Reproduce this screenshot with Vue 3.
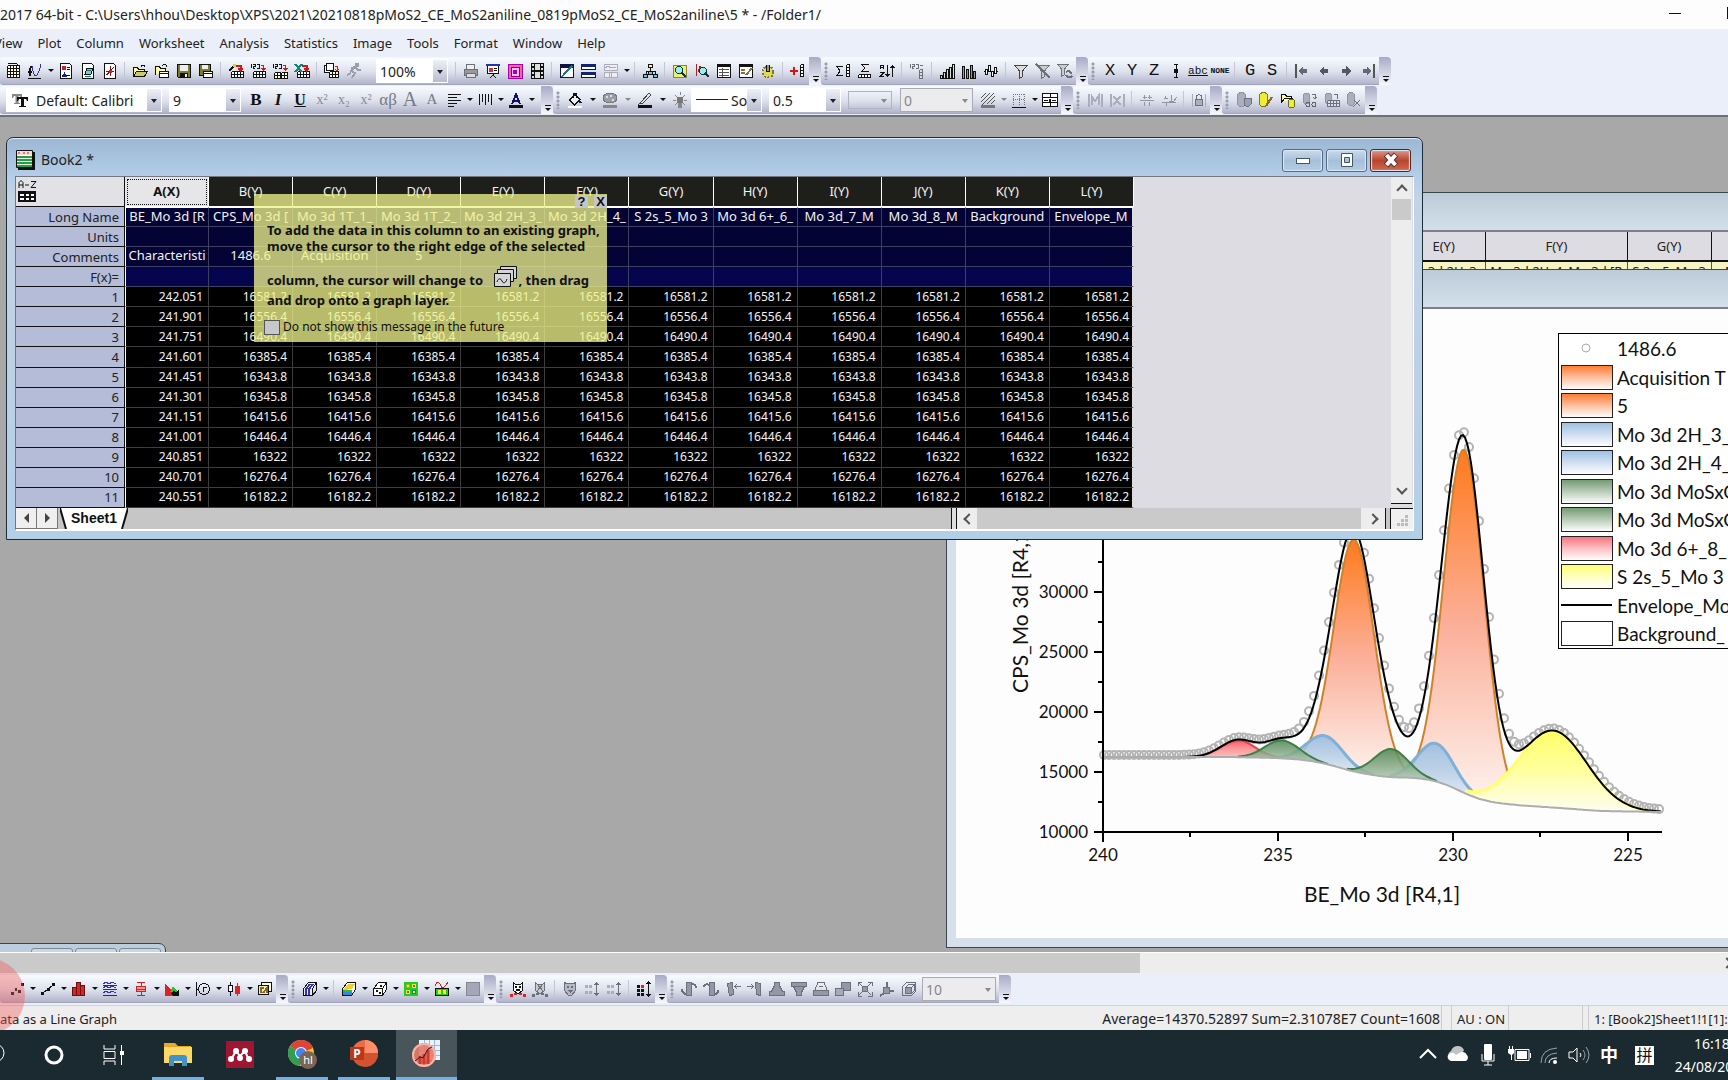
<script setup>
import { h } from 'vue'

/* ---------- icon drawing helpers (16 x 16 grid) ---------- */
const s = (d, c = '#111', w = 1) => `<path d="${d}" fill="none" stroke="${c}" stroke-width="${w}"/>`
const f = (d, c = '#111') => `<path d="${d}" fill="${c}"/>`
const b = (d, c, k = '#111') => `<path d="${d}" fill="${c}" stroke="${k}"/>`
const grid = (x, y, n, m, fill = '#ffd', c = '#111', step = 3) => {
  let d = ''
  for (let i = 0; i <= n; i++) d += `M${x + i * step} ${y}V${y + m * step}`
  for (let j = 0; j <= m; j++) d += `M${x} ${y + j * step}H${x + n * step}`
  return f(`M${x} ${y}h${n * step}v${m * step}h${-n * step}z`, fill) + s(d, c)
}
const page = b('M2.5 .5h9l2 2v13h-11z', '#fff')
const redArrow = s('M8 2.5h4.5v4M10.500 5l2 2.500 2-2.500', '#d01818', 2)
const smallArrow = s('M11 2.500h2.500v4M11.500 5l2 2 2-2', '#d01818')
const digits = s('M1.500 1v4M3 1.500h2v1.500h-2v2h2M7 1.500h2v3.500h-2')
const g1 = '#6d6f7b'
const g2 = '#a9adbd'
const numGrid = grid(3.5, 8.5, 4, 2, '#fff')

const icons = {
  newbook: grid(2.5, 2.5, 4, 4) + s('M2.500 .5h9l3 3'),
  curve: s('M5 2.500c2 14 5 14 9-1', '#339', 1) + s('M4.500 4c-2 0-1 3-2 9M1 8.500h4M1 15.500h13', '#111', 2),
  matrix: page + f('M4 3h4v4H4z', '#c22') + s('M9 4.500h3M9 6.500h3M4 12.500h8') + f('M4 14l2.500-5 2.500 5z', '#228'),
  layout: page + b('M5 11l2-6h6l-2 6z', '#7cc') + s('M5 13.500h6M7 7.500h4', '#177'),
  func: page + s('M4.500 12L12 4M8 3v10M4 8.500h8', '#811') + f('M7 7h3v3H7z', '#c22'),
  open: b('M1.500 13.500v-9h4l1 2h6v2', '#ff9') + b('M1.500 13.500l3-5h11l-3 5z', '#cc6') + s('M9 3.500c2-2 4-1 4 1'),
  opentpl: b('M1.500 11.500v-8h4l1 2h5v2', '#ff9') + b('M5.500 8.500h9v6h-9z', '#fff') + s('M5.500 10h9M8 2.500c2-2 5-1 5 1', '#111', 1),
  save: b('M1.500 1.500h13v13h-12l-1-1z', '#7b7b2a') + f('M4 2h8v6H4z', '#eee') + f('M4 10h8v4H4z') + f('M9 11h2v3H9z', '#eee'),
  savetpl: b('M1.500 1.500h11v11h-11z', '#7b7b2a') + f('M4 2h6v4H4z', '#eee') + b('M5.500 8.500h9v6h-9z', '#fff') + s('M5.500 10h9'),
  imp1: numGrid + s('M1 8l6-6', '#111', 2) + f('M5 1h3v3H5z', '#dc4') + redArrow,
  imp2: numGrid + digits + smallArrow,
  imp3: grid(2.5, 9.5, 2, 2) + grid(9.5, 9.5, 2, 2) + digits + smallArrow,
  excel: numGrid + s('M1 1l7 8M8 1L1 9', '#187', 2) + redArrow,
  batch: b('M.5 2.500h7v7h-7z', '#fff') + b('M2.500 .5h7v7h-7z', '#fff') + s('M11 3.500h2v4M11 6l2 2 2-2', '#c22') + grid(5.5, 8.5, 3, 2),
  run: s('M9 4l-4 4 4 2-3 5M5 5l4-1 3 3h3M5 10l-4 2', '#9a9dab', 2) + f('M9 0h4v4H9z', '#9a9dab'),
  print: b('M3.500 6V1.500h8V6', '#eee', g1) + b('M1.500 6.500h13v6h-13z', '#999', g1) + b('M3.500 10.500h9v4h-9z', '#ddd', g1),
  slide: b('M2.500 2.500h11v8h-11z', '#fff') + f('M1 1h14v2H1z', '#23b') + f('M4 5h4v4H4z', '#c33') + s('M9 5.500h3M9 7.500h3M8 11v2M5 15l3-3 3 3'),
  camera: b('M1 1h14v14H1z', '#e6a', '#a0a') + b('M4 4h8v9H4z', '#fbf', '#808') + '<circle cx="8" cy="9" r="2.500" fill="#a0a"/>',
  film: f('M2 0h13v16H2z') + f('M6 1h5v6H6zM6 9h5v6H6z', '#ddd') + f('M3 1h2v2H3zM3 5h2v2H3zM3 9h2v2H3zM3 13h2v2H3zM12 1h2v2h-2zM12 5h2v2h-2zM12 9h2v2h-2zM12 13h2v2h-2z', '#ddd'),
  note: b('M1.500 2.500h13v12h-13z', '#fff', '#114') + f('M1 1h14v4H1z', '#114') + s('M4 12l9-9M4 12l-1 2', '#277', 2),
  panes: b('M.5 1.500h14v5h-14zM.5 9.500h14v5h-14z', '#fff', '#113') + f('M0 1h15v3H0zM0 9h15v3H0z', '#127'),
  wave: b('M1.500 1.500h13v6h-13z', '#eee', g2) + b('M1.500 9.500h7v5h-7zM6.500 9.500h8v5h-8z', '#eee', g2) + s('M2 5l3-2 3 2 5-1', g2),
  tree: b('M6.500 1.500h4v3h-4z', '#ff6') + s('M8.500 5v3M4 12V8.500h9V12M8.500 8v4') + b('M1.500 11.500h4v3h-4zM11.500 11.500h4v3h-4zM6.500 8.500h4v3h-4z', '#6cc'),
  findy: b('M1.500 2.500h13v12h-13z', '#ee7', '#883') + '<circle cx="7" cy="7" r="3.500" fill="#9ee" stroke="#133"/>' + s('M10 10l4 4', '#133', 2),
  findg: s('M2.500 1v12M4 9l2-6 2 8 2-4', '#a22') + '<circle cx="9" cy="8" r="3.500" fill="#9ee" stroke="#133"/>' + s('M11 10l4 4', '#133', 2),
  list: b('M1.500 1.500h13v13h-13z', '#fff') + f('M1 1h14v3H1z') + s('M3 6.500h10M3 9.500h10M3 12.500h10M6.500 5v9', '#555'),
  listed: b('M1.500 1.500h13v13h-13z', '#fff') + f('M1 1h14v3H1z') + s('M3 6.500h4M3 9.500h4M8 12l6-7', '#774', 2),
  gear: '<circle cx="8" cy="9" r="5.500" fill="#dd5" stroke="#774" stroke-width="2" stroke-dasharray="2 1.500"/>' + b('M6.500 2v6h3V2', '#996'),
  addcol: s('M0 8h8M4 4v8', '#d11', 2) + grid(10.5, 1.5, 1, 4, '#fff'),
  sumcol: s('M8 3.500H2L5 8l-3 4.500h6') + grid(11.5, 1.5, 1, 4, '#fff'),
  sumrow: s('M12 1.500H5L8 5 5 8.500h7') + grid(1.5, 11.5, 4, 1, '#fff'),
  sort: s('M1.500 6V2h3v4M1.500 4.500h3M1 9.500h4l-4 4h4M8.500 2v11M6.500 11l2 2.500 2-2.500M13.500 14V3M11.500 5l2-2.500 2 2.500'),
  num: s('M1.500 1v4M3 1.500h2v1.500h-2v2h2M7 1.500h2v3.500h-2M11 2.500h3', g1) + grid(10.5, 6.5, 1, 3, '#ddd', g1),
  bars1: b('M1.500 12.500h2v3h-2zM4.500 9.500h2v6h-2zM7.500 6.500h2v9h-2zM10.500 4.500h2v11h-2zM13.500 1.500h2v14h-2z', '#ddd'),
  bars2: b('M1.500 3.500h2v12h-2zM5.500 6.500h2v9h-2zM9.500 2.500h2v13h-2zM12.500 8.500h2v7h-2z', '#999'),
  bars3: s('M1 8.500h14') + b('M2.500 6.500h2v5h-2zM5.500 2.500h2v6h-2zM8.500 8.500h2v5h-2zM11.500 4.500h2v6h-2z', '#fff'),
  filt: b('M2 2.500h12L9.500 8v5.500l-3 2V8z', '#ddd', '#444'),
  filtx: b('M2 2.500h12L9.500 8v5.500l-3 2V8z', '#ccc', g1) + s('M1 1l14 14', g1, 2),
  filtr: b('M1 1.500h10L7.500 6v5.500l-3 2V6z', '#ccc', g1) + s('M9 9c3-2 5 0 5 2M15 13c-3 3-5 1-6-1', g1, 2),
  marker: s('M8 1v14M6 1.500h4M6 14.500h4') + f('M6 6h4v4H6z'),
  first: s('M2 1v14', '#555', 2) + f('M5 8l4-5v3h4v4H9v3z', '#667'),
  prev: f('M3 8l5-5v3h4v4H8v3z', '#556'),
  next: f('M13 8L8 3v3H4v4h4v3z', '#556'),
  last: s('M14 1v14', '#555', 2) + f('M11 8L7 3v3H3v4h4v3z', '#667'),
  tt: f('M0 2h10v4H9L8 4H6.500v7H8v1H2v-1h1.500V4H2L1 6H0z', '#888') + f('M5 5h11v4h-1l-1-2h-2v7h2v1H7v-1h2V7H7L6 9H5z'),
  align: s('M2 2.500h13M2 5.500h9M2 8.500h13M2 11.500h9M2 14.500h6'),
  vbars: s('M2.500 2v11M5.500 2v8M8.500 2v11M11.500 2v8M14.500 2v11'),
  fontcol: s('M4 12L8 2l4 10M5 8.500h6', '#116', 2) + f('M1 13h14v3H1z'),
  bucket: b('M2.500 8L8 2.500l5 5L7.500 13z', '#eee') + s('M6 6V1.500h3V6') + f('M12 6l3 5h-3z', '#118') + f('M1 14h14v2H1z', '#fff'),
  palette: '<ellipse cx="8" cy="6" rx="7" ry="5" fill="#999caa" stroke="#777"/>' + f('M4 4h2v2H4zM8 3h2v2H8zM10 7h2v2h-2z', '#ddd') + f('M1 13h14v3H1z', '#888'),
  pen: s('M4 10l8-9 2 2-8 8-4 1z', '#444', 1) + f('M1 13h14v3H1z'),
  bulb: '<circle cx="8" cy="8" r="3.500" fill="#777"/>' + s('M8 0v3M1 8h3M12 8h3M3 3l2 2M13 3l-2 2M3 13l2-2M13 13l-2-2', '#888') + f('M6 11h4v5H6z', '#888'),
  hatch: s('M1 6l5-5M1 10l9-9M2 13L14 1M7 12l8-8M11 12l4-4', '#555', 1) + f('M1 13h14v3H1z', '#777'),
  dots: '<path d="M2 2.500h12M2 7.500h12M2.500 2v12M8.500 2v12M13.500 2v12" stroke="#777" fill="none" stroke-dasharray="1 1"/>' + s('M1 15.500h14'),
  merge: b('M.5 1.500h15v13H.5z', '#fff') + s('M.5 5.500h15M.5 10.500h15M8 1.500v4M8 10.500v4M2 8h4M10 8h4') + f('M7 6.500h2v3H7z'),
  mM: s('M1.500 2v13M14.500 2v13M4.500 13V4L8 9l3.500-5v9', g2, 2),
  mX: s('M1.500 2v13M14.500 2v13M4.500 4l7 9M11.500 4l-7 9', g2, 2),
  sp1: s('M1 8.500h14M5.500 3v4M3.500 5.500h4M5.500 10v4M10.500 3v4M8.500 5.500h4M10.500 10v4', '#9295a5', 1),
  sp2: s('M1 10.500h14M4.500 4v3M2.500 6h4M5.500 11v3M10 3v8M8 9h5l3-4', '#9295a5', 1),
  lock: s('M1.500 2v13M14.500 2v13', g2) + b('M4.500 7.500h7v6h-7z', '#aaaebd', g1) + s('M5.500 7V5c0-3 5-3 5 0v2', g1),
  db: b('M1.500 3v9c0 3 8 3 8 0V3c0-3-8-3-8 0z', '#aaaebd', '#9094a4') + b('M8 6h7v6l-3 3-4-2z', '#9ba0b2', g1),
  dbedit: b('M1.500 3v9c0 3 8 3 8 0V3c0-3-8-3-8 0z', '#ee3', '#773') + s('M8 14l6-9', '#962', 2),
  dbopen: b('M1.500 10.500v-8h4l1 2h5v2', '#ff9') + b('M8.500 9v5c0 2 6 2 6 0V9c0-2-6-2-6 0z', '#ee3', '#663') + s('M2 10l3-4h8'),
  dbview: b('M1.500 3v7c0 2 6 2 6 0V3c0-2-6-2-6 0z', '#aaaebd', '#9094a4') + s('M10 2.500h3v4M11 5l2 2 2-2', g1) + '<circle cx="6" cy="12.500" r="2" fill="none" stroke="#666"/><circle cx="12" cy="12.500" r="2" fill="none" stroke="#666"/>',
  dbgrid: b('M1.500 3v7c0 2 6 2 6 0V3c0-2-6-2-6 0z', '#aaaebd', '#9094a4') + s('M10 2.500h3v4', g1) + grid(3.5, 8.5, 4, 2, '#dde', g1),
  dbdel: b('M1.500 3v8c0 3 7 3 7 0V3c0-3-7-3-7 0z', '#aaaebd', '#9094a4') + s('M8 8l6 6M14 8l-7 7', g1),

  scatter: f('M2 11h3v3H2zM6 7h2v3H6zM9 9h3v3H9zM12 2h3v3h-3z'),
  lsym: s('M3 12L13 4') + f('M1 11h3v3H1zM7 7h3v3H7zM12 2h3v3h-3z'),
  column: b('M1.500 6.500h4v8h-4zM5.500 1.500h4v13h-4zM9.500 4.500h4v10h-4z', '#d22', '#611'),
  waves: s('M1 2.500l3-1 3 1 3-1 4 1M1 6.500l3-1 3 1 3-1 4 1M1 11.500l3-1 3 1 3-1 4 1', '#33a') + s('M1 4.500h14M1 8.500h14M1 14.500h14', '#333'),
  boxp: s('M8 1v14M4 1.500h8M4 14.500h8', '#c22', 1) + b('M3.500 5.500h9v5h-9z', '#f99', '#c22') + s('M3 8h10', '#c22'),
  area: f('M1 3v12h14z', '#d22') + f('M9 5l5 6H6z', '#3b3') + f('M7 12l3-2 2 2 3-4v7H9z'),
  polar: '<circle cx="9" cy="8" r="5.500" fill="none" stroke="#111"/>' + s('M1.500 1v14M1 8h3M8.500 11V6.500h3'),
  stock: s('M4.500 1v14') + b('M2.500 4.500h4v6h-4z', '#fff') + s('M11.500 2v13', '#c22') + f('M9 5h5v8H9z', '#d22'),
  tmpl: b('M4.500 1.500h10v9h-10z', '#ffd') + b('M1.500 4.500h10v9h-10z', '#fe9') + s('M4 12V7h3M6 12l4-5v5', '#863', 2),
  cube: b('M1.500 7.500l5-6h8l-4 6v7h-9z', '#eef') + s('M4 14V8l4-5M7 14V8l4-5', '#33a', 2) + s('M10.500 14.500l4-5v-8'),
  surf: b('M1.500 7.500l5-6h8v7l-4 6h-9z', '#fff') + f('M2 9l5-6h7l-3 5z', '#ec3') + f('M2 9h9v2H2z', '#3b3') + f('M2 11h9v3H2z', '#38d'),
  cubed: b('M1.500 7.500l5-6h8v7l-4 6h-9z', '#fff') + s('M10.500 14V7.500M1.500 7.500h9l4-6') + f('M4 9h2v2H4zM7 11h2v2H7zM8 4h2v2H8z'),
  contour: f('M1 1h14v14H1z', '#2c2') + '<circle cx="5" cy="5" r="2" fill="#ee3" stroke="#aa2"/><circle cx="11" cy="5" r="2" fill="#d33" stroke="#ee3"/><circle cx="5" cy="11" r="2" fill="#d33" stroke="#ee3"/><circle cx="11" cy="11" r="2" fill="#ee3" stroke="#186"/>',
  profile: s('M1 5c2-6 4-4 6 0s4 0 7-4', '#c22') + b('M1.500 7.500h13v7h-13z', '#2c2') + f('M4 9h3v4H4zM9 9h3v4H9z', '#ee3'),
  graysq: b('M1.500 1.500h13v13h-13z', '#a4a7ba', '#888'),
  mask1: b('M3.500 1.500l2 2h5l2-2v8l-4 3h-1l-4-3z', '#fff') + f('M5 5h2v2H5zM9 5h2v2H9zM6 8h4v2H6z') + f('M0 13h3v3H0zM4 12h3v2H4zM9 12h3v2H9zM13 13h3v3h-3z', '#d22'),
  mask2: b('M3.500 1.500l2 2h5l2-2v8l-4 3h-1l-4-3z', '#ccc', g1) + s('M4 2l8 9M12 2l-8 9', g1) + f('M0 13h3v3H0zM4 12h3v2H4zM9 12h3v2H9zM13 13h3v3h-3z', g1),
  mask3: b('M2.500 1.500l2 1h7l2-1v8l-4 5h-3l-4-5z', '#b4b8c8', g1) + f('M5 5h2v2H5zM9 5h2v2H9zM5 9h6l-3 3z', g1),
  pts: f('M1 4h3v3H1zM5 4h3v3H5zM1 10h3v3H1zM5 10h3v3H5z', g2) + s('M12.500 2v12M10.500 4l2-2 2 2M10.500 12l2 2 2-2', g1),
  ptsr: f('M1 4h3v3H1zM1 8h3v3H1zM5 8h3v3H5zM1 12h3v3H1zM5 12h3v3H5z') + f('M5 4h3v3H5z', '#d22') + s('M12.500 1v14M10.500 3l2-2 2 2M10.500 13l2 2 2-2'),
  rot1: b('M5.500 1.500h5v13h-5z', '#9397a8', g1) + s('M1 8c0 4 3 5 4 5M15 7c0-3-2-4-4-4', g1, 2),
  rot2: b('M6.500 1.500h5v13h-5z', '#9397a8', g1) + s('M1 6c0-3 3-3 5-2M15 9c0 4-2 4-4 4', g1, 2),
  tilt1: b('M2.500 2.500l5-1 1 12-4 1z', '#9397a8', g1) + s('M10 5.500h6M12 3l-2 2.500 2 2.500', g1, 1),
  tilt2: b('M13.500 2.500l-5-1 1 12 4 1z', '#9397a8', g1) + s('M0 5.500h6M4 3l2 2.500-2 2.500', g1, 1),
  trap1: b('M5.500 1.500h5v3l3 6h2v4h-15v-4h2l3-6z', '#9397a8', g1),
  trap2: b('M.5 1.500h15v4h-2l-3 6v3h-5v-3l-3-6h-2z', '#9397a8', g1) + s('M1 5.500h14', g1),
  trap3: b('M.5 9.500h15v5H.5z', '#9397a8', g1) + s('M2 9l3-8h6l3 8M6 5.500h4', g1),
  stack: b('M6.500 1.500h9v8h-9z', '#9397a8', g1) + b('M.5 7.500h8v7h-8z', '#a5a9ba', g1),
  expand: b('M5.500 5.500h5v5h-5z', '#9397a8', g1) + s('M1 5V1h4M11 1h4v4M1 11v4h4M11 15h4v-4M2 2l4 4M14 2l-4 4M2 14l4-4M14 14l-4-4', g1),
  axes: b('M4.500 6.500h6v6h-6z', '#9397a8', g1) + s('M7.500 1v6M11 9.500h4M5 12l-4 3', g1, 2),
  cubeg: b('M4.500 6.500h6v6h-6z', '#9397a8', g1) + s('M1.500 14.500v-9l4-4h9v9l-4 4zM10.500 6.500l3-3M4.500 6.500l3-3h6v6l-3 3', g1),
}
const Icon = (p) => h('svg', { viewBox: '0 0 16 16', width: 16, height: 16, 'aria-hidden': 'true', innerHTML: icons[p.name] })
Icon.props = ['name']

/* ---------- menus and toolbars ---------- */
const menus = ['View', 'Plot', 'Column', 'Worksheet', 'Analysis', 'Statistics', 'Image', 'Tools', 'Format', 'Window', 'Help']

// '|' separator, 'v' drop-down arrow (g dimmed, w wide), 't:' text button, anything else an icon
const row1 = [
  ['newbook', 'curve', 'v', 'matrix', 'layout', 'func', '|', 'open', 'opentpl', 'save', 'savetpl', '|', 'imp1', 'imp2', 'imp3', 'excel', '|', 'batch', 'run', { v: '100%', w: 72, label: 'Zoom' }, '|', 'print', 'slide', 'camera', 'film', '|', 'note', 'panes', 'wave', 'v', '|', 'tree', '|', 'findy', 'findg', 'list', 'listed', 'gear', '|', 'addcol'],
  ['sumcol', 'sumrow', 'sort', '|', 'num', '|', 'bars1', 'bars2', 'bars3', '|', 'filt', 'filtx', 'filtr'],
  ['t:X:let', 't:Y:let', 't:Z:let', 'marker', 't:abc:tiny', 't:NONE:none', '|', 't:G:let', 't:S:let', '|', 'first', 'prev', 'next', 'last'],
]
const row2 = [
  [{ v: 'Default: Calibri', w: 156, icon: 'tt', label: 'Font' }, { v: '9', w: 72, label: 'Font size' }, 't:B:bold', 't:I:ital', 't:U:under', 't:x²:off', 't:x₂:off', 't:x²:off', 't:αβ:greek', 't:A:biga', 't:A:offa', 'align', 'v', 'vbars', 'v', 'fontcol', 'v'],
  ['bucket', 'vw', 'palette', 'vwg', 'pen', 'vw', 'bulb', { v: 'So', w: 71, line: true, label: 'Line style' }, { v: '0.5', w: 72, label: 'Line width' }, { v: '', w: 44, dis: true, flat: true, label: 'Pattern colour' }, { v: '0', w: 73, dis: true, label: 'Pattern width' }, 'hatch', 'vg', 'dots', 'v', 'merge'],
  ['mM', 'mX', '|', 'sp1', 'sp2', '|', 'lock'],
  ['db', 'dbedit', 'dbopen', 'dbview', 'dbgrid', 'dbdel'],
]
const row3 = [
  ['scatter', 'v', 'lsym', 'v', 'column', 'v', 'waves', 'v', 'boxp', 'v', 'area', 'v', 'polar', 'v', 'stock', 'v', 'tmpl'],
  ['cube', 'v', '|', 'surf', 'v', 'cubed', 'v', 'contour', 'v', 'profile', 'v', 'graysq'],
  ['mask1', 'mask2', '|', 'mask3', 'pts', 'pts', '|', 'ptsr'],
  ['rot1', 'rot2', 'tilt1', 'tilt2', 'trap1', 'trap2', 'trap3', 'stack', 'expand', 'axes', 'cubeg', { v: '10', w: 74, dis: true, label: 'Angle' }],
]
const bars = { row1, row2, row3 }

const Bar = (p) =>
  h('div', { class: ['bar', p.kind], role: 'toolbar' }, p.groups.map((g, i) =>
    h('div', { class: ['group', i ? 'grip' : 'lead'] }, [
      h('div', { class: 'items' }, g.map((it) => {
        if (it === '|') return h('span', { class: 'sep' })
        if (typeof it === 'object')
          return h('label', { class: ['combo', it.dis && 'dis', it.flat && 'flat'], style: { width: it.w + 'px' } }, [
            it.icon && h(Icon, { name: it.icon }),
            it.line && h('span', { class: 'dash' }),
            h('select', { 'aria-label': it.label, disabled: !!it.dis }, [h('option', it.v)]),
          ])
        if (/^v[wg]*$/.test(it)) return h('button', { class: ['drop', it.includes('w') && 'wide', it.includes('g') && 'dim'], 'aria-label': 'More' })
        if (it.startsWith('t:')) {
          const [, t, c] = it.split(':')
          return h('button', { class: ['tb', c] }, t)
        }
        return h('button', { class: 'tb', 'aria-label': it }, [h(Icon, { name: it })])
      })),
      h('button', { class: 'cap', 'aria-label': 'Toolbar options' }),
    ])))
Bar.props = ['groups', 'kind']

/* ---------- worksheet ---------- */
const cols = 'ABCDEFGHIJKL'.split('').map((c, i) => c + (i ? '(Y)' : '(X)'))
const longNames = ['BE_Mo 3d [R', 'CPS_Mo 3d [', 'Mo 3d 1T_1_', 'Mo 3d 1T_2_', 'Mo 3d 2H_3_', 'Mo 3d 2H_4_', 'S 2s_5_Mo 3', 'Mo 3d 6+_6_', 'Mo 3d_7_M', 'Mo 3d_8_M', 'Background', 'Envelope_M']
const blank = Array(12).fill('')
const meta = [
  ['Long Name', longNames],
  ['Units', blank],
  ['Comments', ['Characteristi', '1486.6', 'Acquisition', '5', ...Array(8).fill('')]],
  ['F(x)=', blank],
]
const cps = ['16581.2', '16556.4', '16490.4', '16385.4', '16343.8', '16345.8', '16415.6', '16446.4', '16322', '16276.4', '16182.2']
const rows = cps.map((v, i) => [i + 1, [(242.051 - i * 0.15).toFixed(3), ...Array(11).fill(v)]])

/* ---------- spectrum: peaks on a falling background ---------- */
const bg = [[1103, 757], [1230, 757], [1277, 758], [1307, 760], [1327, 764], [1355, 772], [1385, 777], [1420, 778], [1440, 782], [1452, 787], [1470, 796], [1490, 802], [1515, 805], [1560, 808], [1600, 811], [1662, 812]]
const lin = (x) => {
  if (x <= bg[0][0]) return bg[0][1]
  for (let i = 1; i < bg.length; i++)
    if (x <= bg[i][0]) {
      const [a, c] = [bg[i - 1], bg[i]]
      return a[1] + ((c[1] - a[1]) * (x - a[0])) / (c[0] - a[0])
    }
  return 812
}
const base = (x) => [-10, -5, 0, 5, 10].reduce((t, d) => t + lin(x + d), 0) / 5
const gauss = (x, p, w = 1) => p.a * Math.exp(-0.5 * ((x - p.x) / (p.s * w)) ** 2)
const peaks = [
  { x: 1354, a: 232, s: 20, fill: 'url(#po)', line: '#d08028', w: 2 },
  { x: 1464, a: 343, s: 20, fill: 'url(#po)', line: '#d08028', w: 2 },
  { x: 1238, a: 17, s: 17, fill: 'url(#pr)', line: '#e0444c', w: 2 },
  { x: 1325, a: 28, s: 18, fill: 'url(#pb)', line: '#7fb0d8', w: 3 },
  { x: 1282, a: 18, s: 17, fill: 'url(#pg)', line: '#3f7f49', w: 2 },
  { x: 1436, a: 38, s: 18, fill: 'url(#pb)', line: '#7fb0d8', w: 3 },
  { x: 1391, a: 28, s: 17, fill: 'url(#pg)', line: '#3f7f49', w: 2 },
  { x: 1553, a: 77, s: 34, fill: 'url(#py)', line: '#ffff70', w: 3 },
]
const trace = (fn, a, c, st = 2) => {
  let d = ''
  for (let x = a; x <= c; x += st) d += (d ? 'L' : 'M') + x + ' ' + fn(x).toFixed(1)
  return d
}
const span = (p) => [p.x - Math.round(p.s * 2.6), Math.min(1662, p.x + Math.round(p.s * (p.a > 300 ? 2.2 : 2.7)))]
const shapes = peaks.map((p) => {
  const [a, c] = span(p)
  const line = trace((x) => base(x) - gauss(x, p), a, c)
  let back = ''
  for (let x = c; x >= a; x -= 4) back += `L${x} ${base(x).toFixed(1)}`
  return { ...p, d: line, area: line + back + 'Z' }
})
const total = (x, w = 1) => base(x) - peaks.reduce((t, p) => t + gauss(x, p, w), 0)
const envelope = trace((x) => total(x), 1103, 1662)
const baseline = trace(base, 1103, 1662)
const dots = []
for (let x = 1104; x <= 1660; x += 5) dots.push([x, +(total(x, 1.04) - 2).toFixed(1)])
const yt = [30000, 25000, 20000, 15000, 10000].map((v) => [v, 832 - (v - 10000) * 0.012])
const xt = [240, 235, 230, 225].map((v) => [v, 1103 + (240 - v) * 35])
const legend = [['1486.6', 'o'], ['Acquisition T', 'url(#lo)'], ['5', 'url(#lo)'], ['Mo 3d 2H_3_', 'url(#lb)'], ['Mo 3d 2H_4_', 'url(#lb)'], ['Mo 3d MoSxO', 'url(#lg)'], ['Mo 3d MoSxO', 'url(#lg)'], ['Mo 3d 6+_8_', 'url(#lr)'], ['S 2s_5_Mo 3', 'url(#ly)'], ['Envelope_Mo', '-'], ['Background_', '#fff']]
const gradients = [
  ['po', ['#ff7a1c', '#fbb09a', '#fdf3ee']], ['pr', ['#f4424a', '#fa8a8c', '#fcbcbc']], ['pb', ['#94bbe2', '#b4cfea', '#dfe9f6']],
  ['pg', ['#4c8450', '#82a883', '#bccfbc']], ['py', ['#ffff66', '#ffffa0', '#fdfdf0']], ['lo', ['#ff7a2c', '#fdbfa0', '#fff']],
  ['lb', ['#9cc0e4', '#d0def0', '#fff']], ['lg', ['#6f996f', '#b9ccb9', '#fff']], ['lr', ['#f7707a', '#fbc0c4', '#fff']], ['ly', ['#ffff70', '#ffffc0', '#fff']],
]
</script>

<template>
  <div class="app">
    <header class="title">
      <span>2017 64-bit - C:\Users\hhou\Desktop\XPS\2021\20210818pMoS2_CE_MoS2aniline_0819pMoS2_CE_MoS2aniline\5 * - /Folder1/</span>
      <div class="sys">
        <button aria-label="Minimize"><i class="min"></i></button>
        <button aria-label="Maximize"><i class="max"></i></button>
      </div>
    </header>
    <nav class="menu"><a v-for="m in menus" :key="m" href="#">{{ m }}</a></nav>
    <Bar :groups="bars.row1" kind="top" />
    <Bar :groups="bars.row2" kind="top second" />

    <main class="desk">
      <section class="win sheet2">
        <div class="cap2"></div>
        <table>
          <thead><tr><th class="w84">E(Y)</th><th class="w141">F(Y)</th><th class="w84">G(Y)</th><th class="w84">H(Y)</th></tr></thead>
          <tbody><tr><td>Mo 3d 2H_3_</td><td>Mo 3d 2H_4_Mo 3d [R</td><td>S 2s_5_Mo 3</td><td>Mo 3d 6+</td></tr></tbody>
        </table>
      </section>

      <section class="win graph">
        <div class="cap2"></div>
        <svg class="plot" viewBox="956 309 772 628" width="772" height="628">
          <defs>
            <linearGradient v-for="g in gradients" :id="g[0]" :key="g[0]" x1="0" y1="0" x2="0" y2="1">
              <stop offset="0" :stop-color="g[1][0]" /><stop offset=".5" :stop-color="g[1][1]" /><stop offset="1" :stop-color="g[1][2]" />
            </linearGradient>
          </defs>
          <circle v-for="(d, i) in dots" :key="'c' + i" :cx="d[0]" :cy="d[1]" r="4" fill="none" stroke="#b4b4b4" stroke-width="2" />
          <g v-for="(p, i) in shapes" :key="'p' + i">
            <path :d="p.area" :fill="p.fill" :fill-opacity="i > 1 && i < 7 ? 0.85 : 1" />
            <path :d="p.d" fill="none" :stroke="p.line" :stroke-width="p.w" />
          </g>
          <path :d="envelope" fill="none" stroke="#000" stroke-width="2" />
          <path :d="baseline" fill="none" stroke="#adadad" stroke-width="2" />
          <g stroke="#000" stroke-width="2">
            <path d="M1103 440V842M1094 832H1662" fill="none" />
            <path v-for="t in yt" :key="t[0]" :d="`M1094 ${t[1]}h9M1098 ${t[1] - 30}h5`" />
            <path v-for="t in xt" :key="t[0]" :d="`M${t[1]} 832v9`" />
            <path d="M1190 832v5M1365 832v5M1540 832v5" />
          </g>
          <g class="ticks">
            <text v-for="t in yt" :key="t[0]" x="1088" :y="t[1] + 6" text-anchor="end">{{ t[0] }}</text>
            <text v-for="t in xt" :key="t[0]" :x="t[1]" y="861" text-anchor="middle">{{ t[0] }}</text>
          </g>
          <text class="axis" x="1382" y="902" text-anchor="middle">BE_Mo 3d [R4,1]</text>
          <text class="axis" transform="translate(1028 693) rotate(-90)">CPS_Mo 3d [R4,1]</text>
          <rect x="1558.500" y="333.500" width="240" height="315" fill="#fff" stroke="#000" />
          <g v-for="(l, i) in legend" :key="i" :transform="`translate(1561 ${336 + Math.round(i * 28.5)})`">
            <circle v-if="l[1] === 'o'" cx="25" cy="12" r="4" fill="none" stroke="#aaa" />
            <path v-else-if="l[1] === '-'" d="M0 12h51" stroke="#000" stroke-width="2" />
            <rect v-else x=".5" y=".5" width="51" height="24" :fill="l[1]" stroke="#222" />
            <text class="leg" x="56" y="20">{{ l[0] }}</text>
          </g>
        </svg>
      </section>

      <section class="win mini"><span v-for="n in 3" :key="n"></span></section>

      <section class="win book">
        <div class="head">
          <svg width="19" height="20" viewBox="0 0 19 20"><path d="M2 2h17v18H2z" fill="#111" /><path d="M.5 .5h16v17H.5z" fill="#fff" stroke="#111" /><path d="M1 1h15v4H1z" fill="#f4dada" /><path d="M3 2v2M8 2v2M12 2v2" stroke="#b22" /><path d="M1 6h15v11H1z" fill="#2c9a4c" /><path d="M1 8.500h15M1 11.500h15M1 14.500h15" stroke="#dfd" /></svg>
          <h1>Book2 *</h1>
          <button aria-label="Minimize window"><svg width="16" height="14"><rect x="1.500" y="5.500" width="13" height="5" fill="#fff" stroke="#456" /></svg></button>
          <button aria-label="Maximize window"><svg width="16" height="14"><path d="M2.500 .5h11v13h-11zM5.500 4.500v5h5v-5z" fill="#fff" fill-rule="evenodd" stroke="#456" /></svg></button>
          <button class="x" aria-label="Close window"><svg width="18" height="16"><path d="M4 2.500l10 11M14 2.500l-10 11" stroke="#533" stroke-width="6" /><path d="M4.500 3l9 10M13.500 3l-9 10" stroke="#fff" stroke-width="4" /></svg></button>
        </div>
        <div class="body">
          <div class="pane">
            <table class="data">
              <thead>
                <tr>
                  <th class="corner" aria-label="Sort"><svg width="20" height="24"><path d="M1 9V3.500L3 1.500l2 2V9M1 6h4M7 6h4M13 2.500h5L13 8.500h5" fill="none" stroke="#111" /><path d="M0 12h18v11H0z" fill="#111" /><path d="M2 15h4v2H2zM8 15h3v2H8zM13 15h3v2h-3zM2 19h4v2H2zM8 19h3v2H8zM13 19h3v2h-3z" fill="#fff" /></svg></th>
                  <th v-for="(c, i) in cols" :key="c" :class="{ act: !i }">{{ c }}</th>
                </tr>
              </thead>
              <tbody>
                <tr v-for="(m, i) in meta" :key="m[0]" :class="['meta', { fx: i === 3 }]">
                  <th>{{ m[0] }}</th><td v-for="(c, j) in m[1]" :key="j">{{ c }}</td>
                </tr>
                <tr v-for="r in rows" :key="r[0]">
                  <th>{{ r[0] }}</th><td v-for="(c, j) in r[1]" :key="j">{{ c }}</td>
                </tr>
              </tbody>
            </table>
            <div class="vs"><i class="chev up"></i><b></b><i class="chev down"></i></div>
          </div>
          <div class="foot">
            <button aria-label="Previous sheet"><i class="tri l"></i></button><button aria-label="Next sheet"><i class="tri r"></i></button>
            <div class="tab"><svg width="68" height="21"><path d="M0 0h68l-5 21H6z" fill="#fff" /><path d="M0 0l6 21M68 0l-6 21" stroke="#111" stroke-width="2" /></svg><a href="#">Sheet1</a></div>
            <div class="hs"><i class="chev left"></i><b></b><i class="chev right"></i></div>
            <svg class="size" width="22" height="20"><path d="M14 6h3v3h-3zM10 10h3v3h-3zM14 10h3v3h-3zM6 14h3v3H6zM10 14h3v3h-3zM14 14h3v3h-3z" fill="#bbb" /></svg>
          </div>
        </div>

        <aside class="tip">
          <div class="tipbtn"><button>?</button><button>X</button></div>
          <p>To add the data in this column to an existing graph,<br>move the cursor to the right edge of the selected</p>
          <p class="two">column, the cursor will change to <svg width="24" height="22"><g fill="#d5d5d5" stroke="#111"><path d="M6.500 .5h16v12h-16z" /><path d="M3.500 3.500h16v12h-16z" /><path d="M.5 7.500h16v13H.5z" /><path d="M3 16c1-4 4-4 5-1s4 2 5-2" fill="none" /></g></svg>, then drag<br>and drop onto a graph layer.</p>
          <label><input type="checkbox">Do not show this message in the future</label>
        </aside>
      </section>
    </main>

    <div class="lower">
      <div class="hscroll"><b></b><i class="chev right"></i></div>
      <Bar :groups="bars.row3" kind="bottom" />
      <footer class="status">
        <span class="hint">ata as a Line Graph</span>
        <span class="stats">Average=14370.52897 Sum=2.31078E7 Count=1608</span>
        <span class="au">AU : ON</span>
        <span class="gapcell"></span>
        <span class="cell">1: [Book2]Sheet1!1[1]:</span>
      </footer>
      <i class="click"></i>
    </div>

    <div class="taskbar">
      <button class="search" aria-label="Search"><svg width="23" height="30"><circle cx="-5" cy="13" r="9" fill="none" stroke="#fff" /></svg></button>
      <button aria-label="Cortana"><svg width="30" height="30"><circle cx="15" cy="15" r="8" fill="none" stroke="#fff" stroke-width="3" /></svg></button>
      <button aria-label="Task view"><svg width="30" height="30" viewBox="3 0 30 30"><path d="M6 5v4h11V5M6 25v-4h11v4M6 11.500h11v7H6zM23.500 5v6M23.500 15v10" fill="none" stroke="#fff" /><path d="M22 11h4v4h-4z" fill="#fff" /></svg></button>
      <button class="run" aria-label="File Explorer"><svg width="30" height="30"><path d="M1 4h11l3 3h13v17H1z" fill="#e9a825" /><path d="M1 8h28v16H1z" fill="#fbd968" /><path d="M6 27v-8q0-3 3-3h12q3 0 3 3v8h-5v-5h-8v5z" fill="#3f93c8" /></svg></button>
      <button aria-label="Mendeley"><svg width="30" height="30"><path d="M1 1h28v27H1z" fill="#9e1632" /><circle cx="11" cy="11" r="3" fill="#fff" /><circle cx="20" cy="11" r="3" fill="#fff" /><path d="M7 18l4-7 4 5 5-5 3 7" stroke="#fff" stroke-width="2" fill="none" /><circle cx="6" cy="19" r="3" fill="#fff" /><circle cx="15" cy="18" r="3" fill="#fff" /><circle cx="24" cy="19" r="3" fill="#fff" /></svg></button>
      <button class="run" aria-label="Chrome"><svg width="32" height="32"><circle cx="15" cy="15" r="13" fill="#f4c430" /><path d="M15 15L4 8a13 13 0 0 1 23 2z" fill="#db4437" /><path d="M15 15L4 8a13 13 0 0 0 10 20z" fill="#2f9e57" /><circle cx="15" cy="15" r="6" fill="#fff" /><circle cx="15" cy="15" r="5" fill="#4285f4" /><circle cx="22" cy="22" r="9" fill="#7a6558" /><text x="22" y="26" text-anchor="middle" fill="#fff" font-size="11">hl</text></svg></button>
      <button class="run" aria-label="PowerPoint"><svg width="30" height="30"><circle cx="16" cy="14" r="13" fill="#ed6c47" /><path d="M16 1a13 13 0 0 1 13 13H16z" fill="#ff8f6b" /><path d="M29 14a13 13 0 0 1-26 2l13-2z" fill="#d35230" /><path d="M1 8h14v13H1z" fill="#b9371b" /><text x="8" y="19" text-anchor="middle" fill="#fff" font-size="12" font-weight="700">P</text></svg></button>
      <button class="run active" aria-label="Origin"><svg width="32" height="32"><path d="M8 2h21v20H8z" fill="#e8f2fa" /><path d="M8 7.500h21M8 12.500h21M8 17.500h21M13.500 2v20M18.500 2v20M23.500 2v20" stroke="#8fbbe0" fill="none" /><circle cx="13" cy="17" r="12" fill="#e8796a" fill-opacity=".9" /><circle cx="13" cy="17" r="11" fill="none" stroke="#f6b5a8" stroke-width="2" /><path d="M9 18v8M13 16v10M17 12v14" stroke="#d4382c" stroke-width="3" /><path d="M4 23l5-4 3 1 5-9 4-2" stroke="#222" fill="none" /></svg></button>
      <div class="tray">
        <svg width="30" height="30"><path d="M7 18l8-8 8 8" fill="none" stroke="#fff" stroke-width="2" /></svg>
        <svg width="30" height="30"><path d="M8 20a5 5 0 0 1 0-9 7 7 0 0 1 13-1l-5 10z" fill="#bfc3c6" /><path d="M6 20a4 4 0 0 1 2-7q3-1 5 2 8-6 11 0a4 4 0 0 1-1 6H8z" fill="#fff" /></svg>
        <svg width="30" height="30"><rect x="11" y="4" width="8" height="16" rx="1" fill="#fff" /><path d="M9 14v7h12v-7M15 21v4M11 25h8" fill="none" stroke="#fff" stroke-width="1" /></svg>
        <svg width="30" height="30"><path d="M12 9.500h14v11H12z" fill="none" stroke="#fff" /><path d="M14 11h10v8H14zM27 13h1v5h-1zM5 9h6v4l-2 2v5H8v-5l-3-2z" fill="#fff" /><path d="M6.500 6v3M9.500 6v3" stroke="#fff" /></svg>
        <svg width="30" height="30" fill="none" stroke="#99a1a5"><path d="M8 23Q8 9 24 8M12 23q0-9 12-10" /><path d="M16 23q0-5 8-5" stroke="#fff" /><circle cx="22" cy="22" r="2" fill="#fff" stroke="none" /></svg>
        <svg width="30" height="30" fill="none" stroke="#fff"><path d="M6 12h4l4-4v14l-4-4H6zM17 13q2 2 0 4" /><path d="M20 10q4 5 0 10M23 7q6 8 0 16" stroke="#99a1a5" /></svg>
        <span class="zh">中</span><span class="pin">拼</span>
        <div class="clock"><span>16:18</span><span>24/08/2021</span></div>
      </div>
    </div>
  </div>
</template>

<style>
html, body { margin: 0; overflow: hidden; }
.bar { display: flex; height: 29px; background: #ebeff9; }
.bar.second { border-bottom: 2px solid #6d7074; }
.bar.bottom { height: 28px; padding: 2px 0; }
.group { display: flex; height: 28px; }
.items { display: flex; align-items: center; background: linear-gradient(#f6f9fd 5%, #dde1ec 55%, #b2b4cb); border-radius: 3px 0 0 3px; border-bottom: 1px solid #a3a5b8; box-sizing: border-box; }
.lead .items { padding-left: 2px; }
.second .lead .items { padding-left: 6px; padding-right: 5px; }
.bottom .lead .items { padding-left: 6px; }
.grip .items::before { content: ''; width: 11px; height: 18px; background: radial-gradient(circle at 5px 2px, #9a9cae 1px, transparent 2px) 0 0 / 11px 4px; }
.cap { position: relative; width: 12px; padding: 0; border: 0; background: linear-gradient(#a9abc6, #d5d7e6 60%, #f7f8fc); border-radius: 0 4px 0 0; }
.cap::before { content: ''; position: absolute; left: 4px; bottom: 8px; width: 6px; height: 1px; background: #111; }
.cap::after { content: ''; position: absolute; left: 4px; bottom: 3px; border: 3px solid transparent; border-top-color: #111; border-bottom: 0; }
.tb { width: 22px; height: 24px; padding: 0; border: 0; background: none; display: flex; align-items: center; justify-content: center; font: 14px "Liberation Sans", sans-serif; color: #111; }
.tb svg { shape-rendering: crispEdges; display: block; }
.tb.let { font: 17px "Liberation Mono", monospace; }
.tb.tiny { font: 11px "Liberation Mono", monospace; text-decoration: underline; }
.tb.none { font: bold 8px "Liberation Mono", monospace; }
.tb.bold { font: bold 17px "Liberation Serif", serif; }
.tb.ital { font: italic bold 17px "Liberation Serif", serif; }
.tb.under { font: bold 16px "Liberation Serif", serif; text-decoration: underline; }
.tb.off { font: 14px "Liberation Serif", serif; color: #8a8c98; }
.tb.greek { font: 17px "Liberation Serif", serif; color: #777985; }
.tb.biga { font: 20px "Liberation Serif", serif; color: #777985; }
.tb.offa { font: 15px "Liberation Serif", serif; color: #777985; }
.drop { width: 9px; height: 22px; padding: 0; border: 0; background: none; display: flex; align-items: center; justify-content: center; }
.drop.wide { width: 13px; }
.drop::after { content: ''; border: 3px solid transparent; border-top-color: #111; border-bottom: 0; }
.drop.dim::after { border-top-color: #888; }
.sep { width: 1px; height: 18px; margin: 0 4px 0 3px; background: #c3c6d6; }
.combo { position: relative; display: flex; align-items: center; box-sizing: border-box; height: 24px; margin-right: 7px; background: #fff; border: 1px solid #fff; }
.combo:has(+ .tb) { margin-right: 4px; }
.top:not(.second) .lead .combo { margin: 0 4px 0 11px; }
.combo svg { margin: 0 5px; }
.combo select { flex: 1; min-width: 0; height: 22px; appearance: none; border: 0; background: none; padding: 1px 0 0 3px; font: 14px "Noto Sans", sans-serif; color: #222; opacity: 1; }
.combo::after { content: ''; width: 14px; height: 22px; background: linear-gradient(#eef0f7, #b9bcd2); }
.combo::before { content: ''; position: absolute; right: 4px; top: 10px; border: 3px solid transparent; border-top: 4px solid #222; border-bottom: 0; z-index: 1; }
.combo.dis { background: #ececee; border-color: #a8aab4; }
.combo.dis::after { background: none; }
.combo.dis::before { border-top-color: #888; }
.combo.dis select { color: #888; }
.combo.flat { height: 18px; background: none; border-color: #b0b3c4; margin-right: 8px; }
.combo.flat::before { top: 7px; }
.bottom .combo { margin: 0 3px 0 2px; }
.dash { width: 32px; height: 1px; margin-left: 4px; background: #222; }
</style>

<style scoped>
.app { display: flex; flex-direction: column; height: 100vh; min-height: 700px; overflow: hidden; font: 13px/20px "Noto Sans", "Noto Sans CJK SC", sans-serif; color: #222; background: #ebeff9; }
button { padding: 0; border: 0; background: none; }
a { color: inherit; text-decoration: none; }
.title { display: flex; justify-content: space-between; height: 29px; background: #fdfdfd; font-size: 14px; line-height: 29px; white-space: nowrap; }
.sys { display: flex; gap: 46px; margin-right: -11px; }
.sys button { width: 12px; height: 26px; }
.min, .max { display: block; width: 12px; height: 1px; background: #111; }
.max { height: 10px; border: 1px solid #111; background: none; }
.menu { display: flex; gap: 15px; height: 28px; line-height: 28px; margin-left: -6px; white-space: nowrap; }
.desk { position: relative; flex: 1; min-height: 0; overflow: hidden; background: #a8a8a8; }

.win { position: absolute; box-sizing: border-box; overflow: hidden; border: 1px solid #3c454d; background: #d6e0ec; }
.cap2 { height: 39px; box-sizing: border-box; background: linear-gradient(#bccbd8, #d3e0ea); border-bottom: 2px solid #7c7f88; }
.sheet2 { left: 1392px; top: 75px; right: -80px; height: 400px; padding-left: 9px; }
.sheet2 table { table-layout: fixed; width: 394px; border-spacing: 0; }
.sheet2 th { height: 30px; box-sizing: border-box; padding: 0; border-right: 1px solid #111; border-bottom: 2px solid #111; background: #dddce2; font-weight: 400; }
.sheet2 td { padding: 0; border-right: 1px solid #555; background: #f6f4c4; text-align: center; overflow: hidden; white-space: nowrap; line-height: 18px; }
.w84 { width: 84px; }
.w141 { width: 141px; }
.graph { left: 946px; top: 152px; right: -60px; height: 679px; padding: 0 9px; }
.plot { display: block; background: #fdfdfd; font-family: Lato, "Noto Sans", sans-serif; fill: #111; box-shadow: 0 1px #fff; }
.ticks { font-size: 17px; }
.axis { font-size: 21px; }
.leg { font-size: 19px; }
.mini { left: -20px; top: 826px; width: 186px; height: 30px; border-radius: 0 7px 0 0; background: #bccddd; display: flex; gap: 2px; padding: 4px 0 0 50px; }
.mini span { width: 42px; height: 26px; box-sizing: border-box; border: 1px solid #808a96; border-radius: 3px; background: #c9d7e4; }

.book { left: 6px; top: 20px; width: 1417px; height: 403px; overflow: visible; padding: 0 8px; border-color: #1d2d38; border-radius: 7px 7px 0 0; background: linear-gradient(#9bb7d3, #b4cee9 38px, #c4d3e6 60px, #b3cfe6); box-shadow: inset 0 1px #e4eef8; }
.head { display: flex; align-items: center; gap: 3px; height: 38px; box-sizing: border-box; padding: 6px 3px 0 0; }
.head h1 { flex: 1; margin: 0 0 0 3px; font-size: 14px; font-weight: 400; }
.head > svg { margin-left: 1px; }
.head button { display: flex; align-items: center; justify-content: center; width: 41px; height: 23px; border: 1px solid #566b85; border-radius: 3px; background: linear-gradient(#c9dbec, #a7c0da 50%, #b4cde4); box-shadow: inset 0 0 1px 1px #dde9f4; }
.head button.x { background: linear-gradient(#dc9a8c, #b8452e 50%, #d06a50); border-color: #5c2520; }
.body { border-top: 1px solid #75777e; border-left: 1px solid #75777e; background: #dddce2; border-right: 1px solid #fff; border-bottom: 2px solid #fff; }
.pane { display: flex; justify-content: space-between; height: 331px; overflow: hidden; }
.data { table-layout: fixed; width: 1118px; border-spacing: 0; color: #f2f2f2; flex: none; }
.data th, .data td { box-sizing: border-box; height: 20px; padding: 0; line-height: 18px; font-weight: 400; white-space: nowrap; overflow: hidden; }
.data thead th { height: 30px; padding-bottom: 1px; background: #1e1e1b; border-right: 1px solid #fff; border-bottom: 1px solid #fff; font-size: 13px; }
.data thead .corner { width: 109px; padding: 0; text-align: left; vertical-align: top; background: #e2e2e6; border-color: #111; }
.data thead .act { background: #e6e6e8; color: #111; font-weight: 700; outline: 1px dotted #111; outline-offset: -3px; }
.corner svg { display: block; margin: 2px; }
.data tbody th { padding-right: 5px; text-align: right; background: #b4bcd7; color: #222; border-bottom: 1px solid #111; border-right: 1px solid #111; }
.data td { padding-right: 5px; text-align: right; font-size: 12px; background: #000; border-right: 1px solid #3d3d3d; border-bottom: 1px solid #3d3d3d; }
.data td:nth-child(2) { border-left: 1px solid #fff; }
.data td:last-child { border-right: 2px solid #ddd; padding-right: 3px; }
.data .meta td { padding: 0; text-align: center; font-size: 13px; line-height: 17px; vertical-align: top; background: #030335; border-color: #3f4060; }
.data .meta td:nth-child(2) { border-left-color: #fff; }
.data .meta td:last-child { border-right-color: #ddd; }
.data .meta:first-child td { border-top: 1px solid #fff; }
.data .fx td { background: #05054e; }

.vs { display: flex; flex-direction: column; align-items: center; width: 21px; height: 326px; background: #ededed; border-bottom: 1px solid #111; margin-right: 1px; }
.vs b { width: 19px; height: 21px; margin-top: 5px; background: #cacaca; }
.vs .up { margin-top: 9px; }
.vs .down { margin-top: auto; margin-bottom: 10px; }
.chev { display: block; width: 6px; height: 6px; border: solid #555; border-width: 2px 2px 0 0; flex: none; }
.up { transform: rotate(-45deg); }
.down { transform: rotate(135deg); }
.left { transform: rotate(-135deg); }
.right { transform: rotate(45deg); }
.foot { display: flex; height: 21px; background: #c6c6c6; }
.foot button { width: 21px; height: 21px; display: flex; align-items: center; justify-content: center; background: #efefef; border-right: 1px solid #777; border-bottom: 1px solid #777; box-sizing: border-box; }
.tri { border: 5px solid transparent; }
.tri.l { border-right-color: #444; border-left: 0; }
.tri.r { border-left-color: #444; border-right: 0; }
.tab { position: relative; margin-left: 2px; }
.tab svg { display: block; }
.tab a { position: absolute; inset: 0; text-align: center; font: bold 14px/20px "Liberation Sans", sans-serif; color: #111; }
.hs { display: flex; align-items: center; width: 428px; margin-left: auto; background: #ededed; border-left: 1px solid #111; border-right: 1px solid #111; box-shadow: -4px 0 #ddd, -5px 0 #111; }
.hs b { flex: 1; height: 21px; margin: 0 8px 0 4px; background: #cacaca; }
.hs .left { margin-left: 8px; }
.hs .right { margin-right: 8px; }
.size { margin-left: 4px; background: #f0f0f0; border-left: 1px solid #111; border-top: 1px solid #111; }

.tip { position: absolute; left: 247px; top: 56px; width: 353px; height: 148px; box-sizing: border-box; padding: 0 0 0 13px; background: rgba(240, 243, 138, .77); color: #111; }
.tipbtn { position: absolute; right: 0; top: 1px; display: flex; gap: 6px; }
.tipbtn button { width: 13px; height: 13px; background: #c3c6cc; font: bold 13px/13px "Liberation Sans", sans-serif; color: #111; }
.tip p { margin: 28px 0 0; font-size: 13px; line-height: 16px; font-weight: 700; white-space: nowrap; }
.tip p.two { margin-top: 12px; line-height: 20px; }
.two svg { margin: 0 0 0 8px; vertical-align: -3px; }
.tip label { display: flex; align-items: center; gap: 3px; margin: 7px 0 0 -3px; font-size: 12px; }
.tip input { appearance: none; width: 16px; height: 15px; margin: 0; background: #c6c8cc; border: 1px solid #555; }

.lower { position: relative; overflow: hidden; flex: none; }
.hscroll { display: flex; align-items: center; justify-content: space-between; height: 20px; border-top: 1px solid #fff; background: #ededed; }
.hscroll b { width: 66%; height: 20px; background: #cacaca; }
.hscroll .right { margin-right: -3px; }
.status { display: flex; height: 25px; box-sizing: border-box; border-top: 1px solid #ccd2e0; background: #eee; line-height: 26px; white-space: nowrap; }
.hint { flex: 1; }
.stats { padding-right: 1px; border-right: 1px solid #ccc; font-size: 14px; }
.au { width: 51px; margin-left: 9px; padding-left: 5px; border-left: 1px solid #ccc; border-right: 1px solid #ccc; }
.gapcell { width: 73px; border-right: 1px solid #ccc; }
.cell { width: 134px; margin-left: 5px; padding-left: 5px; border-left: 1px solid #ccc; overflow: hidden; }
.click { position: absolute; left: -51px; top: 6px; width: 76px; height: 76px; border-radius: 50%; background: rgba(240, 90, 90, .4); pointer-events: none; }

.taskbar { display: flex; flex: none; height: 50px; background: #1a2a30; overflow: hidden; }
.taskbar button { display: flex; align-items: center; justify-content: center; width: 62px; height: 50px; box-sizing: border-box; font-family: "Noto Sans", sans-serif; }
.taskbar .search { width: 23px; }
.taskbar .run { width: 52px; margin: 0 5px; border-bottom: 3px solid #76b0de; }
.taskbar .run.active { width: 61px; margin: 0 0 0 1px; background: #48555b; }
.tray { display: flex; align-items: center; margin-left: auto; color: #fff; }
.zh { width: 32px; text-align: center; font-size: 18px; font-weight: 700; }
.pin { width: 19px; height: 19px; margin: 0 20px 0 10px; background: #fff; color: #111; font-size: 16px; line-height: 18px; text-align: center; }
.clock { display: flex; flex-direction: column; width: 54px; align-items: center; font-size: 14px; line-height: 23px; white-space: nowrap; }
.clock span { width: 76px; margin-right: -22px; text-align: center; }
</style>
